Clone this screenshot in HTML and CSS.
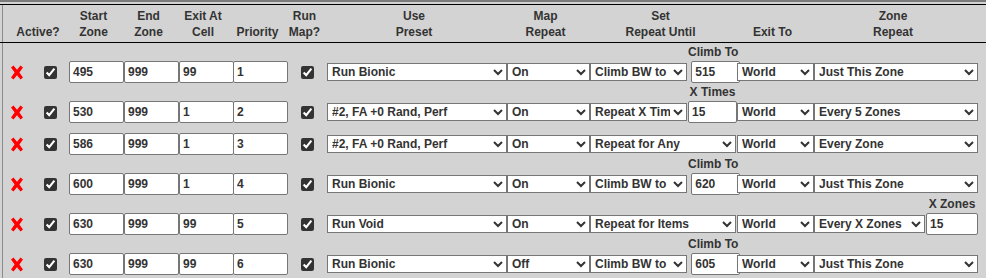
FILE: index.html
```html
<!DOCTYPE html>
<html>
<head>
<meta charset="utf-8">
<link rel="stylesheet" href="styles.css">
</head>
<body>
<div class="topbar"></div>
<div class="frame">
  <div class="grid head">
    <div class="h h-active">Active?</div>
    <div class="h">Start<br>Zone</div>
    <div class="h">End<br>Zone</div>
    <div class="h">Exit At<br>Cell</div>
    <div class="h">Priority</div>
    <div class="h">Run<br>Map?</div>
    <div class="h">Use<br>Preset</div>
    <div class="h">Map<br>Repeat</div>
    <div class="h">Set<br>Repeat Until</div>
    <div class="h">Exit To</div>
    <div class="h">Zone<br>Repeat</div>
  </div>

  <div class="grid row">
    <div class="cell center"><svg class="del" viewBox="0 0 14 15"><path d="M1 2.5 L3.5 0.5 L7 4.8 L10.5 0.5 L13 2.5 L9.4 7.5 L13 12.5 L10.5 14.5 L7 10.2 L3.5 14.5 L1 12.5 L4.6 7.5 Z"/></svg></div>
    <div class="cell center"><input type="checkbox" checked></div>
    <div class="cell"><input class="num" type="text" value="495"></div>
    <div class="cell"><input class="num" type="text" value="999"></div>
    <div class="cell"><input class="num" type="text" value="99"></div>
    <div class="cell"><input class="num" type="text" value="1"></div>
    <div class="cell center"><input type="checkbox" checked></div>
    <div class="cell"><select class="sel-preset"><option>Run Bionic</option></select></div>
    <div class="cell"><select class="sel-map"><option>On</option></select></div>
    <div class="cell combo">
      <select class="sel-until"><option>Climb BW to Level</option></select>
      <div class="field"><div class="lbl lbl-shift">Climb To</div><input class="val" type="text" value="515"></div>
    </div>
    <div class="cell"><select class="sel-exit"><option>World</option></select></div>
    <div class="cell"><select class="sel-zone"><option>Just This Zone</option></select></div>
  </div>

  <div class="grid row">
    <div class="cell center"><svg class="del" viewBox="0 0 14 15"><path d="M1 2.5 L3.5 0.5 L7 4.8 L10.5 0.5 L13 2.5 L9.4 7.5 L13 12.5 L10.5 14.5 L7 10.2 L3.5 14.5 L1 12.5 L4.6 7.5 Z"/></svg></div>
    <div class="cell center"><input type="checkbox" checked></div>
    <div class="cell"><input class="num" type="text" value="530"></div>
    <div class="cell"><input class="num" type="text" value="999"></div>
    <div class="cell"><input class="num" type="text" value="1"></div>
    <div class="cell"><input class="num" type="text" value="2"></div>
    <div class="cell center"><input type="checkbox" checked></div>
    <div class="cell"><select class="sel-preset"><option>#2, FA +0 Rand, Perf</option></select></div>
    <div class="cell"><select class="sel-map"><option>On</option></select></div>
    <div class="cell combo">
      <select class="sel-until"><option>Repeat X Times</option></select>
      <div class="field"><div class="lbl">X Times</div><input class="val" type="text" value="15"></div>
    </div>
    <div class="cell"><select class="sel-exit"><option>World</option></select></div>
    <div class="cell"><select class="sel-zone"><option>Every 5 Zones</option></select></div>
  </div>

  <div class="grid row">
    <div class="cell center"><svg class="del" viewBox="0 0 14 15"><path d="M1 2.5 L3.5 0.5 L7 4.8 L10.5 0.5 L13 2.5 L9.4 7.5 L13 12.5 L10.5 14.5 L7 10.2 L3.5 14.5 L1 12.5 L4.6 7.5 Z"/></svg></div>
    <div class="cell center"><input type="checkbox" checked></div>
    <div class="cell"><input class="num" type="text" value="586"></div>
    <div class="cell"><input class="num" type="text" value="999"></div>
    <div class="cell"><input class="num" type="text" value="1"></div>
    <div class="cell"><input class="num" type="text" value="3"></div>
    <div class="cell center"><input type="checkbox" checked></div>
    <div class="cell"><select class="sel-preset"><option>#2, FA +0 Rand, Perf</option></select></div>
    <div class="cell"><select class="sel-map"><option>On</option></select></div>
    <div class="cell"><select class="sel-until-full"><option>Repeat for Any</option></select></div>
    <div class="cell"><select class="sel-exit"><option>World</option></select></div>
    <div class="cell"><select class="sel-zone"><option>Every Zone</option></select></div>
  </div>

  <div class="grid row">
    <div class="cell center"><svg class="del" viewBox="0 0 14 15"><path d="M1 2.5 L3.5 0.5 L7 4.8 L10.5 0.5 L13 2.5 L9.4 7.5 L13 12.5 L10.5 14.5 L7 10.2 L3.5 14.5 L1 12.5 L4.6 7.5 Z"/></svg></div>
    <div class="cell center"><input type="checkbox" checked></div>
    <div class="cell"><input class="num" type="text" value="600"></div>
    <div class="cell"><input class="num" type="text" value="999"></div>
    <div class="cell"><input class="num" type="text" value="1"></div>
    <div class="cell"><input class="num" type="text" value="4"></div>
    <div class="cell center"><input type="checkbox" checked></div>
    <div class="cell"><select class="sel-preset"><option>Run Bionic</option></select></div>
    <div class="cell"><select class="sel-map"><option>On</option></select></div>
    <div class="cell combo">
      <select class="sel-until"><option>Climb BW to Level</option></select>
      <div class="field"><div class="lbl lbl-shift">Climb To</div><input class="val" type="text" value="620"></div>
    </div>
    <div class="cell"><select class="sel-exit"><option>World</option></select></div>
    <div class="cell"><select class="sel-zone"><option>Just This Zone</option></select></div>
  </div>

  <div class="grid row">
    <div class="cell center"><svg class="del" viewBox="0 0 14 15"><path d="M1 2.5 L3.5 0.5 L7 4.8 L10.5 0.5 L13 2.5 L9.4 7.5 L13 12.5 L10.5 14.5 L7 10.2 L3.5 14.5 L1 12.5 L4.6 7.5 Z"/></svg></div>
    <div class="cell center"><input type="checkbox" checked></div>
    <div class="cell"><input class="num" type="text" value="630"></div>
    <div class="cell"><input class="num" type="text" value="999"></div>
    <div class="cell"><input class="num" type="text" value="99"></div>
    <div class="cell"><input class="num" type="text" value="5"></div>
    <div class="cell center"><input type="checkbox" checked></div>
    <div class="cell"><select class="sel-preset"><option>Run Void</option></select></div>
    <div class="cell"><select class="sel-map"><option>On</option></select></div>
    <div class="cell"><select class="sel-until-full"><option>Repeat for Items</option></select></div>
    <div class="cell"><select class="sel-exit"><option>World</option></select></div>
    <div class="cell combo">
      <select class="sel-zone-short"><option>Every X Zones</option></select>
      <div class="field"><div class="lbl">X Zones</div><input class="val-zone" type="text" value="15"></div>
    </div>
  </div>

  <div class="grid row">
    <div class="cell center"><svg class="del" viewBox="0 0 14 15"><path d="M1 2.5 L3.5 0.5 L7 4.8 L10.5 0.5 L13 2.5 L9.4 7.5 L13 12.5 L10.5 14.5 L7 10.2 L3.5 14.5 L1 12.5 L4.6 7.5 Z"/></svg></div>
    <div class="cell center"><input type="checkbox" checked></div>
    <div class="cell"><input class="num" type="text" value="630"></div>
    <div class="cell"><input class="num" type="text" value="999"></div>
    <div class="cell"><input class="num" type="text" value="99"></div>
    <div class="cell"><input class="num" type="text" value="6"></div>
    <div class="cell center"><input type="checkbox" checked></div>
    <div class="cell"><select class="sel-preset"><option>Run Bionic</option></select></div>
    <div class="cell"><select class="sel-map"><option>Off</option></select></div>
    <div class="cell combo">
      <select class="sel-until"><option>Climb BW to Level</option></select>
      <div class="field"><div class="lbl lbl-shift">Climb To</div><input class="val" type="text" value="605"></div>
    </div>
    <div class="cell"><select class="sel-exit"><option>World</option></select></div>
    <div class="cell"><select class="sel-zone"><option>Just This Zone</option></select></div>
  </div>
</div>
</body>
</html>
```

FILE: styles.css
```css
html, body {
  margin: 0;
  padding: 0;
  background: #d3d3d3;
}
body {
  font: bold 12px "Liberation Sans", Arial, sans-serif;
  color: #333;
  width: 986px;
  height: 278px;
  overflow: hidden;
}
.topbar {
  height: 2px;
  background: #7a7a7a;
}
.frame {
  margin-top: 2px;
  border-top: 1px solid #000;
  background: linear-gradient(#8c8c8c, #8c8c8c) 2px 0 / 1px 100% no-repeat;
  min-height: 273px;
}
.grid {
  display: grid;
  grid-template-columns: 28px 38px 55px 55px 54px 55px 39px 180px 83px 147px 77px 164px;
  padding-left: 3px;
}
.head {
  padding: 3px 0 2px;
  border-bottom: 1px solid #000;
  align-items: end;
  line-height: 16px;
}
.h {
  text-align: center;
  white-space: nowrap;
}
.h-active {
  grid-column: 1 / 3;
  padding-left: 10px;
}
.row {
  min-height: 32px;
  align-items: end;
}
.cell {
  height: 22px;
  display: flex;
  align-items: center;
}
.cell.center {
  justify-content: center;
}
.combo {
  height: auto;
  align-items: flex-end;
  gap: 1px;
}
.field {
  display: flex;
  flex-direction: column;
  align-items: center;
}
.lbl {
  line-height: 18px;
  white-space: nowrap;
  text-align: center;
}
.lbl-shift {
  margin-right: 5px;
}
.del {
  width: 14px;
  height: 15px;
  fill: #ff0000;
  display: block;
}
input[type="checkbox"] {
  margin: 0;
  width: 13px;
  height: 13px;
  accent-color: #333;
}
.cell:nth-child(2) input[type="checkbox"] {
  margin-left: 1px;
}
input[type="text"] {
  box-sizing: border-box;
  height: 22px;
  margin: 0;
  padding: 1px 3px;
  border: 1px solid #767676;
  border-radius: 2px;
  font: bold 12px "Liberation Sans", Arial, sans-serif;
  color: #333;
  background: #fff;
}
.num { width: 55px; }
.val { width: 49px; }
.val-zone { width: 52px; }
select {
  box-sizing: border-box;
  height: 18px;
  margin: 0;
  font: bold 12px "Liberation Sans", Arial, sans-serif;
  color: #333;
  background: #fff;
}
.combo select { margin-bottom: 2px; }
.sel-preset { width: 180px; }
.sel-map { width: 83px; }
.sel-until { width: 97px; }
.sel-until-full { width: 146px; }
.sel-exit { width: 77px; }
.sel-zone { width: 164px; }
.sel-zone-short { width: 112px; }
```
